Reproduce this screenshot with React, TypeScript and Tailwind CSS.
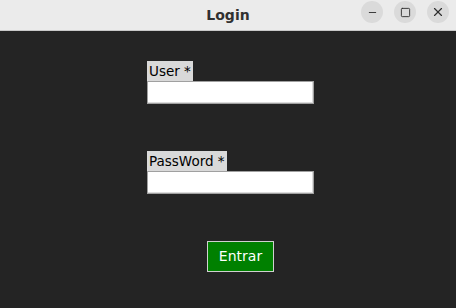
import { Minus, Square, X } from 'lucide-react'

// Janela de login — barra de título estilo GNOME + formulário simples
export default function App() {
  return (
    <div className="flex h-[308px] w-[456px] flex-col bg-[#242424] font-['DejaVu_Sans',sans-serif]">
      <div className="relative flex h-[31px] shrink-0 items-center justify-center border-b border-[#c8c8c8] bg-[#ebebeb]">
        <span className="text-[14px] font-bold text-[#303030]">Login</span>
        <div className="absolute right-[7px] top-[1px] flex gap-[11px]">
          <button className="grid h-[22px] w-[22px] place-items-center rounded-full bg-[#dadada] text-[#2e2e2e]">
            <Minus size={11} strokeWidth={2} />
          </button>
          <button className="grid h-[22px] w-[22px] place-items-center rounded-full bg-[#dadada] text-[#2e2e2e]">
            <Square size={11} strokeWidth={2} />
          </button>
          <button className="grid h-[22px] w-[22px] place-items-center rounded-full bg-[#dadada] text-[#2e2e2e]">
            <X size={14} strokeWidth={2} />
          </button>
        </div>
      </div>

      <div className="flex flex-col pl-[147px] pt-[30px]">
        <span className="w-fit bg-[#d9d9d9] px-[2px] text-[13.5px] leading-[20px] text-black">User *</span>
        <input className="h-[23px] w-[167px] border border-[#a0a0a0] bg-white shadow-[inset_-1px_-1px_0_#dcdcdc] outline-none" />

        <span className="mt-[47px] w-fit bg-[#d9d9d9] px-[2px] text-[13.5px] leading-[20px] text-black">PassWord *</span>
        <input type="password" className="h-[23px] w-[167px] border border-[#a0a0a0] bg-white shadow-[inset_-1px_-1px_0_#dcdcdc] outline-none" />

        <button className="ml-[60px] mt-[47px] h-[31px] w-[67px] border border-[#d0d0d0] bg-[#008000] text-[14px] text-white">
          Entrar
        </button>
      </div>
    </div>
  )
}
